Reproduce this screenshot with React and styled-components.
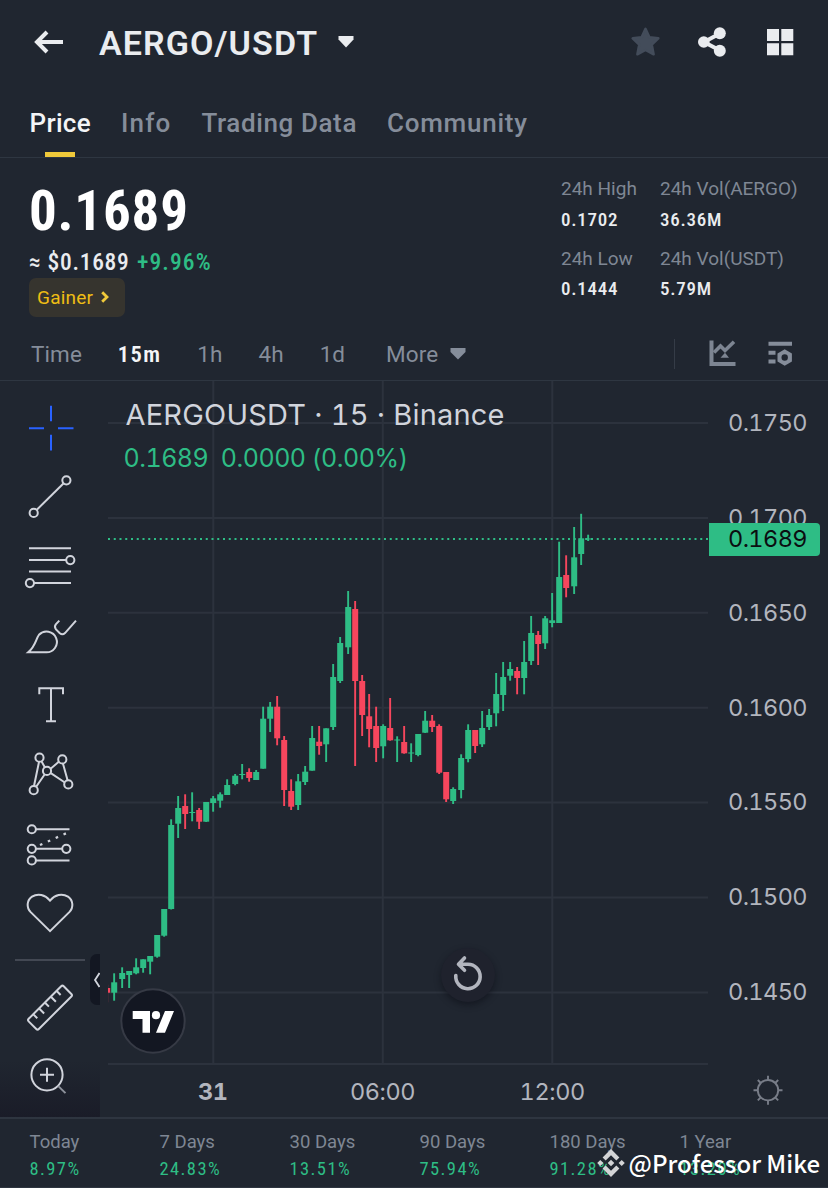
import styled, { createGlobalStyle } from 'styled-components';

const GlobalStyle = createGlobalStyle`
    * {
        box-sizing: border-box;
    }
    body {
        margin: 0;
        background: #202630;
        color: #eaecef;
        font-family: Roboto, "Liberation Sans", sans-serif;
    }
    svg {
        display: block;
        flex: none;
    }
`
const Page = styled.div`
    position: relative;
    width: 828px;
    height: 1188px;
    overflow: hidden;
    background: #202630;
    white-space: nowrap;
`
const Header = styled.header`
    height: 86px;
    padding: 0 34px;
    display: flex;
    align-items: center;

    svg {
        margin-bottom: 2px;
    }
`
const Title = styled.h1`
    margin: 0 20px 0 35px;
    font-size: 34px;
    font-weight: 600;
    letter-spacing: 1.1px;
`
const HeaderActions = styled.div`
    margin-left: auto;
    display: flex;
    align-items: center;
    gap: 38px;
`
const Tabs = styled.nav`
    height: 72px;
    padding-left: 29.5px;
    display: flex;
    gap: 30px;
    border-bottom: 1px solid #2e3641;
`
const Tab = styled.div`
    position: relative;
    line-height: 74px;
    font-size: 26px;
    font-weight: 500;
    letter-spacing: ${p => p.$spacing}px;
    color: ${p => p.$active ? '#f4f5f7' : '#858d9a'};
`
const TabMark = styled.span`
    position: absolute;
    left: 15.5px;
    bottom: 0;
    width: 30px;
    height: 5px;
    background: #f0c93a;
`
const Summary = styled.section`
    height: 169px;
    padding: 0 29px;
    display: flex;
    justify-content: space-between;
`
const LastPrice = styled.div`
    margin-top: 25px;
    line-height: 57px;
    font-size: 55px;
    font-weight: 700;
    font-stretch: 78%;
    letter-spacing: 0.8px;
    color: #fff;
`
const FiatPrice = styled.div`
    margin-top: 9px;
    line-height: 26px;
    font-size: 23.5px;
    font-weight: 500;
    font-stretch: 82%;
    letter-spacing: 0.7px;
`
const Change = styled.span`
    margin-left: 7.5px;
    letter-spacing: 1.1px;
    color: #2ebd85;
`
const Badge = styled.div`
    width: 95.5px;
    height: 38.5px;
    margin-top: 3px;
    padding-left: 8px;
    display: flex;
    align-items: center;
    gap: 8px;
    border-radius: 7px;
    background: #36342e;
    color: #efbd14;
    font-size: 19px;
    letter-spacing: 0.2px;
`
const Stats = styled.div`
    width: 238px;
    padding-top: 18px;
    display: grid;
    grid-template-columns: 99px 1fr;
    align-content: start;
    row-gap: 13px;
`
const Stat = styled.div`
    display: flex;
    flex-direction: column;
    gap: 4.5px;
    line-height: 26px;
`
const StatLabel = styled.span`
    font-size: 19px;
    color: #7f8794;
`
const StatValue = styled.span`
    font-size: 19px;
    font-weight: 500;
    font-stretch: 86%;
    letter-spacing: 0.75px;
`
const Intervals = styled.div`
    height: 54px;
    padding: 0 35px 0 31px;
    display: flex;
    align-items: center;
    border-bottom: 1px solid #2e3641;
`
const Interval = styled.span`
    margin-right: 35.9px;
    font-size: 22.5px;
    font-weight: ${p => p.$active ? 600 : 400};
    font-stretch: ${p => p.$active ? '85%' : '98%'};
    letter-spacing: ${p => p.$active ? 1.4 : 0.1}px;
    color: ${p => p.$active ? '#f4f5f7' : '#858d9a'};
`
const More = styled(Interval)`
    margin: 0 12px 0 5px;
`
const IntervalActions = styled.div`
    height: 30px;
    margin-left: auto;
    padding-left: 34px;
    display: flex;
    align-items: center;
    gap: 32px;
    border-left: 1px solid #353c47;
`
const ChartSection = styled.section`
    height: 736px;
    display: flex;
`
const Toolbar = styled.aside`
    position: relative;
    width: 100px;
    padding-top: 13px;
    background: linear-gradient(#202630 680px, #1a1c28 736px);
`
const ToolSvg = styled.svg`
    width: 100px;
    height: 69.3px;
    fill: none;
    stroke: ${p => p.$active ? '#2962ff' : '#d1d4dc'};
    stroke-width: 2;
`
const ToolDivider = styled.div`
    height: 2px;
    margin: 11px 15px 12px;
    background: #434853;
`
const Collapse = styled.div`
    position: absolute;
    top: 573px;
    right: 0;
    width: 10px;
    height: 51px;
    display: flex;
    align-items: center;
    justify-content: flex-end;
    border-radius: 7px 0 0 7px;
    background: #131722;
`
const ChartMain = styled.div`
    position: relative;
    flex: 1;
    font-family: Inter, sans-serif;
    font-variant-numeric: tabular-nums;
`
const PlotRow = styled.div`
    height: 684px;
    display: flex;
`
const PriceAxis = styled.div`
    padding: 29px 0 0 20px;
    display: flex;
    flex-direction: column;
    gap: 68.85px;
    font-size: 23.5px;
    line-height: 26px;
    letter-spacing: -0.6px;
    color: #b2b5be;
`
const PriceTag = styled.div`
    position: absolute;
    top: 142px;
    left: 608.5px;
    width: 111.5px;
    height: 32.5px;
    padding-left: 19.5px;
    border-radius: 0 4px 4px 0;
    background: #2ebd85;
    color: #0b0e11;
    font-size: 23.5px;
    line-height: 32px;
    letter-spacing: -0.6px;
`
const Legend = styled.div`
    position: absolute;
    top: 16px;
    left: 24px;
`
const LegendTitle = styled.div`
    padding-left: 1.5px;
    font-size: 29px;
    line-height: 36px;
    letter-spacing: 0.2px;
    color: #d1d4dc;
`
const LegendValues = styled.div`
    margin-top: 7px;
    margin-left: -0.5px;
    display: flex;
    gap: 12.5px;
    font-size: 25px;
    line-height: 36px;
    letter-spacing: -0.5px;
    color: #2ebd85;
`
const TimeAxis = styled.div`
    height: 52px;
    padding-left: 28px;
    display: flex;
    align-items: center;
    font-size: 23.5px;
    color: #b2b5be;
`
const TimeLabel = styled.div`
    width: 169.7px;
    padding-top: 1px;
    text-align: center;
    letter-spacing: -0.4px;
    font-weight: ${p => p.$bold ? 700 : 400};
`
const GearSvg = styled.svg`
    margin-left: 87px;
`
const LogoSvg = styled.svg`
    position: absolute;
    left: 20px;
    top: 607px;
`
const ResetButton = styled.div`
    position: absolute;
    left: 341px;
    top: 567px;
    width: 54px;
    height: 54px;
    border-radius: 50%;
    background: #1f222d;
    box-shadow: 0 3px 6px rgba(10, 12, 20, 0.5);
`
const Footer = styled.footer`
    height: 71px;
    padding: 10px 0 0 29.5px;
    display: grid;
    grid-template-columns: repeat(6, 130px);
    border-top: 2px solid #2e3540;
    border-bottom: 1px solid #2e3540;
`
const Period = styled.div`
    font-size: 18.5px;
    line-height: 27px;
    color: #7f8794;
`
const PeriodChange = styled.div`
    font-stretch: 86%;
    letter-spacing: 1.4px;
    color: #2ebd85;
`
const Watermark = styled.div`
    position: absolute;
    right: 8px;
    bottom: 7px;
    display: flex;
    align-items: center;
    gap: 4px;
    font-family: "Noto Sans CJK SC", "Noto Sans", sans-serif;
    font-size: 24px;
    font-weight: 500;
    line-height: 36px;
    color: #fff;
`

const tabs = [['Price', 0.3], ['Info', 1.2], ['Trading Data', 0.6], ['Community', 0.75]]
const stats = [
    ['24h High', '0.1702'],
    ['24h Vol(AERGO)', '36.36M'],
    ['24h Low', '0.1444'],
    ['24h Vol(USDT)', '5.79M'],
]
const prices = ['0.1750', '0.1700', '0.1650', '0.1600', '0.1550', '0.1500', '0.1450']
const periods = [
    ['Today', '8.97%'],
    ['7 Days', '24.83%'],
    ['30 Days', '13.51%'],
    ['90 Days', '75.94%'],
    ['180 Days', '91.28%'],
    ['1 Year', '13.20%'],
]

// direction, wick top, body top, body bottom, wick bottom
const candles = [
    ['r', 984.7, 988, 992.7, 1002.3], ['g', 973.3, 982.3, 992.7, 1000.7], ['g', 967.3, 973, 979, 988],
    ['g', 971, 971, 975, 988], ['g', 958.3, 967.3, 973.3, 974.3], ['g', 959.3, 959.3, 968, 972.7],
    ['g', 956, 956, 961.7, 974.3], ['g', 935, 935, 956.7, 957.7], ['g', 909, 909, 935.7, 936.7],
    ['g', 819.3, 825, 909, 909.5], ['g', 796, 808, 823.7, 838], ['r', 794.3, 806, 814, 829],
    ['g', 792.3, 812, 813, 821.3], ['r', 808, 810, 821.7, 829], ['g', 802, 802, 821.7, 822],
    ['g', 796, 798.3, 803, 811.7], ['g', 792.3, 794.3, 800.7, 807.7], ['g', 779.3, 785, 795, 795],
    ['g', 774, 775.7, 784, 785.3], ['g', 764, 774, 775, 779.3], ['r', 768.3, 772, 778, 781.7],
    ['g', 770, 772, 780, 780], ['g', 706.7, 718.7, 768.7, 768.7], ['g', 702, 706.7, 718.7, 732],
    ['r', 696, 706.7, 738.3, 745.3], ['r', 736, 740, 790, 806], ['r', 779.3, 791, 806.7, 810],
    ['g', 774, 781.3, 805, 810], ['g', 766, 771.7, 782, 785], ['g', 726, 738, 770.7, 770.7],
    ['r', 726, 741.7, 746, 754.7], ['g', 728.3, 728.3, 744.3, 762], ['g', 664, 677, 727, 730],
    ['g', 637, 643, 681, 683], ['g', 591, 607, 647.3, 654], ['r', 601, 609, 681, 766],
    ['r', 675, 681, 715, 736], ['r', 694, 716.3, 729, 747.3], ['r', 706.7, 726, 748, 762],
    ['g', 724.3, 726, 746.3, 758.3], ['r', 698, 728, 740.3, 740.7], ['g', 736.3, 739.5, 740.5, 762],
    ['r', 726, 742, 753.3, 753.7], ['g', 743.3, 752.5, 753.5, 762], ['g', 734, 734, 755, 756.3],
    ['g', 711, 720.7, 732.7, 733], ['r', 715, 720.7, 727, 732], ['r', 724.3, 726, 772.7, 774],
    ['r', 772, 772, 799.3, 802], ['g', 787.3, 789, 801, 804], ['g', 754.3, 758, 790, 798.3],
    ['g', 724.3, 730, 759, 762.3], ['r', 730, 730, 746, 753], ['g', 711, 728, 744.3, 747],
    ['g', 709, 715, 727, 730], ['g', 673, 694, 713.3, 726.3], ['g', 662, 677, 695, 711],
    ['g', 662, 669, 675.7, 680.7], ['r', 667, 671, 678, 694.3], ['g', 641, 662, 678, 694.3],
    ['g', 616, 633, 661, 665], ['r', 631, 635, 644, 665], ['g', 616, 618.3, 643.3, 649],
    ['g', 593, 620.3, 623, 627.3], ['g', 541.7, 577, 623, 623], ['r', 555.3, 575, 588, 597.3],
    ['g', 527, 557.3, 586.3, 594], ['g', 513.8, 538.3, 554, 565], ['g', 534.7, 538.5, 539.5, 541],
]

function Tool({ active, children }) {
    return (
        <ToolSvg viewBox="-50 -34.65 100 69.3" $active={active}>
            {children}
        </ToolSvg>
    );
}

function Dots({ points }) {
    return points.map(([x, y]) => <circle key={`${x},${y}`} cx={x} cy={y} r="4.1" />);
}

function Tools() {
    return (
        <Toolbar>
            <Tool active>
                <path d="M-21 -.4H-6M8 -.4H23.5M1 -22.9V-7.4M1 6.1V21.9" />
            </Tool>
            <Tool>
                <path d="M-13.4 12.3L13.4 -14.2" />
                <Dots points={[[-16.3, 15.3], [16.4, -17.3]]} />
            </Tool>
            <Tool>
                <path d="M-21 -19.3H21M-21 -7.6H16M-21 3.8H21M-16 15.4H21" />
                <Dots points={[[20.3, -7.6], [-20.1, 15.4]]} />
            </Tool>
            <Tool>
                <path d="M-21.8 15.7C-14 8.9 -14.5 2.9 -11 -1.9A10.4 10.4 0 1 1 -4 15.7Z" />
                <path d="M9.3 -16L5.8 -12.3Q4 -9.9 6 -7.3L9.8 -3.4Q12.5 -1.3 15 -3.6L26 -16" />
            </Tool>
            <Tool>
                <path d="M-10.7 -11.3V-17.3H13V-11.3M1 -17.3V15.7M-4 15.7H6" />
            </Tool>
            <Tool>
                <path d="M-11 -12.7L-16 11.4M-8.4 -13.2L-5.2 -7.4M.6 -6L8.8 -12.8M-5.4 -.2L-14 12.3M13 -11L17.6 5.5M.8 -1.6L14.5 7.6" />
                <Dots points={[[-10.5, -17], [12.3, -15.2], [-3, -3.7], [-16.3, 15.5], [18.3, 9.8]]} />
            </Tool>
            <Tool>
                <path d="M-14 -15.4H19.5M-14 4.2H12M-14 15.8H19.5" />
                <path d="M-10 .4L18 -12.2" strokeWidth="2.3" strokeDasharray="2.6 6" />
                <Dots points={[[-18.2, -15.4], [-18.2, 4.2], [16.3, 4.2], [-18.2, 15.8]]} />
            </Tool>
            <Tool>
                <path d="M0 17.5L-19.3 -1.5C-23.8 -6.3 -23.3 -13.3 -18 -17C-12 -20.8 -5 -19 0 -13C5 -19 12 -20.8 18 -17C23.3 -13.3 23.8 -6.3 19.3 -1.5Z" />
            </Tool>
            <ToolDivider />
            <Tool>
                <g transform="rotate(-45)">
                    <rect x="-24.8" y="-7.2" width="49.6" height="14.4" rx="1.8" />
                    <path d="M-16.5 -7V-1.5M-8.3 -7V0M0 -7V-1.5M8.3 -7V0M16.5 -7V-1.5" />
                </g>
            </Tool>
            <Tool>
                <circle cx="-3" cy="-2.8" r="15.6" />
                <path d="M-10 -2.8H4M-3 -9.8V4.2" />
                <path d="M8.3 8.5L15.5 15.5" stroke="#8d919b" />
            </Tool>
            <Collapse>
                <svg width="8" height="16" fill="none" stroke="#d1d4dc" strokeWidth="1.8">
                    <path d="M7.5 1L3 8L7.5 15" />
                </svg>
            </Collapse>
        </Toolbar>
    );
}

function Plot() {
    return (
        <svg width="608" height="684" viewBox="100 381 608 684">
            <g stroke="#2c323d" strokeWidth="2">
                {prices.map((p, i) => <path key={p} d={`M108 ${423 + i * 94.9}H708`} />)}
                <path d="M213.3 381V1064M382.8 381V1064M552.3 381V1064" />
                <path d="M108 1064H708" />
            </g>
            <path d="M108 539H708" stroke="#2ebd85" strokeWidth="2" strokeDasharray="2 3.75" />
            <svg x="108" y="381" width="600" height="683" viewBox="108 381 600 683">
                {candles.map(([dir, high, top, bottom, low], i) => {
                    const x = Math.round(107.4 + i * 7.0625);
                    return (
                        <g key={i} fill={dir === 'g' ? '#2ebd85' : '#f6465d'}>
                            <rect x={x - 0.8} y={high} width="1.9" height={low - high} />
                            <rect x={x - 2.8} y={top} width="6" height={bottom - top} />
                        </g>
                    );
                })}
            </svg>
        </svg>
    );
}

function App() {
    return (
        <>
            <GlobalStyle />
            <Page>
                <Header>
                    <svg width="30" height="24" fill="none" stroke="#eaecef" strokeWidth="4">
                        <path d="M3 12H29M13 2L3 12L13 22" />
                    </svg>
                    <Title>AERGO/USDT</Title>
                    <svg width="16" height="12" fill="#eaecef">
                        <path d="M0.5 0H15.5V3.5L8 11.5L0.5 3.5Z" />
                    </svg>
                    <HeaderActions>
                        <svg width="29" height="30" viewBox="0 0 29 30" fill="#434c5a" stroke="#434c5a" strokeWidth="2.5" strokeLinejoin="round">
                            <path d="M14.5 1.8L18.4 10.2L27.3 11.3L20.8 17.7L22.6 27.3L14.5 23L6.4 27.3L8.2 17.7L1.7 11.3L10.6 10.2Z" />
                        </svg>
                        <svg width="29" height="30" viewBox="0 0 29 30" fill="#eaecef">
                            <path d="M22 6.5L6 15L22 23.5" fill="none" stroke="#eaecef" strokeWidth="4" />
                            <circle cx="21.8" cy="6.3" r="6" />
                            <circle cx="5.8" cy="15" r="5.8" />
                            <circle cx="21.8" cy="23.7" r="6" />
                        </svg>
                        <svg width="29" height="27" viewBox="-2 0 29 27" fill="#eaecef">
                            <path d="M0 0H12V12H0ZM14.3 0H26.3V12H14.3ZM0 14.3H12V26.3H0ZM14.3 14.3H26.3V26.3H14.3Z" />
                        </svg>
                    </HeaderActions>
                </Header>
                <Tabs>
                    {tabs.map(([name, spacing], i) => (
                        <Tab key={name} $active={i === 0} $spacing={spacing}>
                            {name}
                            {i === 0 && <TabMark />}
                        </Tab>
                    ))}
                </Tabs>
                <Summary>
                    <div>
                        <LastPrice>0.1689</LastPrice>
                        <FiatPrice>≈ $0.1689<Change>+9.96%</Change></FiatPrice>
                        <Badge>
                            Gainer
                            <svg width="8" height="12" fill="none" stroke="#f0c93a" strokeWidth="2.8">
                                <path d="M1.2 1.2L6 6L1.2 10.8" />
                            </svg>
                        </Badge>
                    </div>
                    <Stats>
                        {stats.map(([label, value]) => (
                            <Stat key={label}>
                                <StatLabel>{label}</StatLabel>
                                <StatValue>{value}</StatValue>
                            </Stat>
                        ))}
                    </Stats>
                </Summary>
                <Intervals>
                    <Interval>Time</Interval>
                    <Interval $active>15m</Interval>
                    <Interval>1h</Interval>
                    <Interval>4h</Interval>
                    <Interval>1d</Interval>
                    <More>More</More>
                    <svg width="16" height="12" fill="#858d9a">
                        <path d="M0.5 0H15.5V4L8 11.5L0.5 4Z" />
                    </svg>
                    <IntervalActions>
                        <svg width="27" height="27" viewBox="0 0 27 27" fill="none" stroke="#7d8592" strokeWidth="4">
                            <path d="M2.5 0.5V24H26.5" />
                            <path d="M5 12.5L11.5 6L16 10.5L25 1.8" strokeWidth="3.6" />
                            <path d="M11.5 17.8H20L16 12.8Z" fill="#7d8592" stroke="none" />
                        </svg>
                        <svg width="25" height="25" viewBox="0 0 25 25" fill="#858d9a">
                            <path d="M0.5 0.8H24V4.8H0.5ZM0.5 9.8H7.5V13.8H0.5ZM0.5 18.6H7.5V22.6H0.5Z" />
                            <path d="M16.7 8.3L23.9 12.4V20.6L16.7 24.7L9.5 20.6V12.4Z" />
                            <circle cx="16.7" cy="16.5" r="3.2" fill="#202630" />
                        </svg>
                    </IntervalActions>
                </Intervals>
                <ChartSection>
                    <Tools />
                    <ChartMain>
                        <PlotRow>
                            <Plot />
                            <PriceAxis>
                                {prices.map(p => <span key={p}>{p}</span>)}
                            </PriceAxis>
                        </PlotRow>
                        <TimeAxis>
                            <TimeLabel $bold>31</TimeLabel>
                            <TimeLabel>06:00</TimeLabel>
                            <TimeLabel>12:00</TimeLabel>
                            <GearSvg width="88" height="52" viewBox="-44 -26 88 52" fill="none" stroke="#787d88" strokeWidth="1.9">
                                <g transform="translate(0 -.8)">
                                    <circle r="10.2" />
                                    <path d="M0 -10V-14.5M0 10V14.5M-10 0H-14.5M10 0H14.5M-7.2 -7.2L-10.2 -10.2M7.2 -7.2L10.2 -10.2M-7.2 7.2L-10.2 10.2M7.2 7.2L10.2 10.2" />
                                </g>
                            </GearSvg>
                        </TimeAxis>
                        <PriceTag>0.1689</PriceTag>
                        <Legend>
                            <LegendTitle>AERGOUSDT · 15 · Binance</LegendTitle>
                            <LegendValues>
                                <span>0.1689</span>
                                <span>0.0000 (0.00%)</span>
                            </LegendValues>
                        </Legend>
                        <LogoSvg width="66" height="66" viewBox="-33 -33 66 66" fill="#fff">
                            <circle r="31.7" fill="#131722" stroke="#363a45" strokeWidth="2" />
                            <path d="M-20.3 -10H-3V11.7H-10.5V-2H-20.3ZM12 -10H21L12 11.7H3Z" />
                            <circle cx="3" cy="-5.8" r="4.1" />
                        </LogoSvg>
                        <ResetButton>
                            <svg width="54" height="54" viewBox="0 0 54 54" fill="none" stroke="#b2b5be" strokeWidth="3.6" strokeLinecap="round" strokeLinejoin="round">
                                <path d="M14.8 27.5A12.2 12.2 0 1 0 27 16.3H18M23.5 10L17.5 16.3L23.5 22.3" />
                            </svg>
                        </ResetButton>
                    </ChartMain>
                </ChartSection>
                <Footer>
                    {periods.map(([label, change]) => (
                        <Period key={label}>
                            {label}
                            <PeriodChange>{change}</PeriodChange>
                        </Period>
                    ))}
                </Footer>
                <Watermark>
                    <svg width="28" height="28" viewBox="-14 -14 28 28" fill="#d3d4d6">
                        <path d="M0 -14L8.4 -5.6L5.3 -2.5L0 -7.8L-5.3 -2.5L-8.4 -5.6ZM0 14L8.4 5.6L5.3 2.5L0 7.8L-5.3 2.5L-8.4 5.6ZM0 -3.3L3.3 0L0 3.3L-3.3 0ZM-10.7 -3.1L-7.6 0L-10.7 3.1L-13.8 0ZM10.7 -3.1L13.8 0L10.7 3.1L7.6 0Z" />
                    </svg>
                    @Professor Mike
                </Watermark>
            </Page>
        </>
    );
}

export default App;
